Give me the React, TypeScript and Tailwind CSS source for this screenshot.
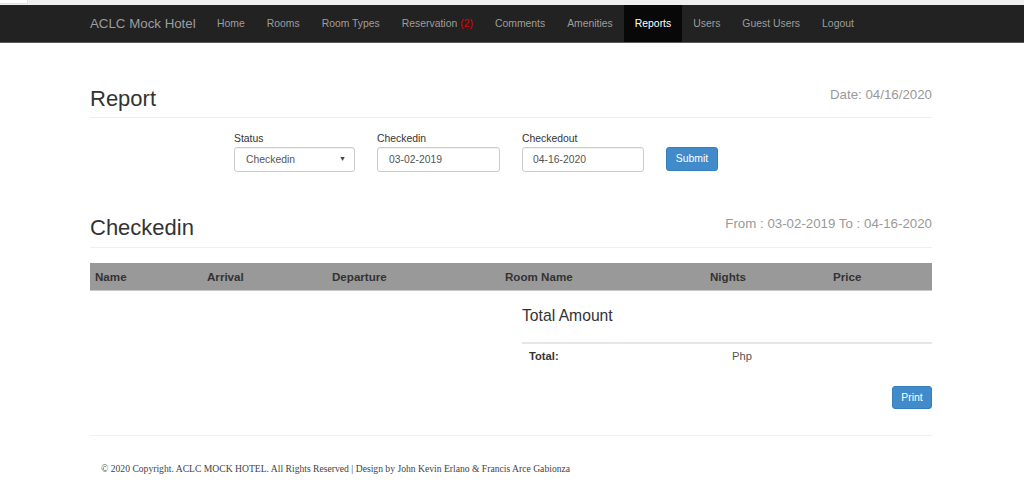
import React from "react";

const navItems = [
  "Home",
  "Rooms",
  "Room Types",
  "Reservation",
  "Comments",
  "Amenities",
  "Reports",
  "Users",
  "Guest Users",
  "Logout",
];

export default function App() {
  return (
    <div className="w-[1024px] h-[492px] bg-white overflow-hidden font-['Liberation_Sans',Arial,sans-serif] text-[#333]">
      {/* top strip */}
      <div className="h-[5px] bg-[#efefef] relative">
        <div className="absolute left-0 top-0 w-[28px] h-[4px] bg-white border-r border-b border-[#e2e2e2]" />
      </div>
      {/* navbar */}
      <div className="h-[38px] bg-[#222] border-b border-[#5a5a5a] flex items-stretch">
        <div className="ml-[90px] w-[116px] pt-[1px] flex items-center text-[13.3px] text-[#9d9d9d]">
          ACLC Mock Hotel
        </div>
        <div className="flex items-stretch">
          {navItems.map((n) => (
            <div
              key={n}
              className={
                n === "Reports"
                  ? "px-[11px] pt-[1px] flex items-center text-[10.4px] text-white bg-[#080808]"
                  : "px-[11px] pt-[1px] flex items-center text-[10.4px] text-[#9d9d9d]"
              }
            >
              {n}
              {n === "Reservation" && (
                <span className="ml-[3px] text-[#e00000]">(2)</span>
              )}
            </div>
          ))}
        </div>
      </div>

      <div className="ml-[90px] w-[842px]">
        {/* header 1 */}
        <div className="mt-[43px] pb-[7px] border-b border-[#eee] flex justify-between items-start">
          <h2 className="text-[22px] leading-[24px] text-[#333] pt-[1px] -mb-[1px]">Report</h2>
          <div className="text-[13.3px] leading-[16px] text-[#999] mt-[1px]">Date: 04/16/2020</div>
        </div>

        {/* form */}
        <div className="ml-[144px] mt-[15px] flex items-end gap-[22px]">
          <div className="flex flex-col">
            <label className="text-[10.4px] leading-[12px] mb-[2px] text-[#333]">Status</label>
            <div className="w-[121px] h-[25px] border border-[#ccc] rounded-[3px] flex items-center justify-between pl-[11px] pr-[8px] text-[10.4px] text-[#555] shadow-[inset_0_1px_1px_rgba(0,0,0,0.06)]">
              <span>Checkedin</span>
              <span className="text-[7px] text-[#444]">▼</span>
            </div>
          </div>
          <div className="flex flex-col">
            <label className="text-[10.4px] leading-[12px] mb-[2px] text-[#333]">Checkedin</label>
            <div className="w-[123px] h-[25px] border border-[#ccc] rounded-[3px] flex items-center pl-[11px] text-[10.4px] text-[#555] shadow-[inset_0_1px_1px_rgba(0,0,0,0.06)]">
              03-02-2019
            </div>
          </div>
          <div className="flex flex-col">
            <label className="text-[10.4px] leading-[12px] mb-[2px] text-[#333]">Checkedout</label>
            <div className="w-[122px] h-[25px] border border-[#ccc] rounded-[3px] flex items-center pl-[10px] text-[10.4px] text-[#555] shadow-[inset_0_1px_1px_rgba(0,0,0,0.06)]">
              04-16-2020
            </div>
          </div>
          <div className="w-[52px] h-[24px] mb-[1px] bg-[#428bca] border border-[#357ebd] rounded-[3px] text-white text-[10.4px] flex items-center justify-center">
            Submit
          </div>
        </div>

        {/* header 2 */}
        <div className="mt-[44px] pb-[7px] border-b border-[#eee] flex justify-between items-start">
          <h2 className="text-[22px] leading-[24px] text-[#333]">Checkedin</h2>
          <div className="text-[13.3px] leading-[16px] text-[#999]">
            From : 03-02-2019 To : 04-16-2020
          </div>
        </div>

        {/* table header */}
        <div className="mt-[15px] h-[28px] bg-[#999] border-b border-[#c8c8c8] flex items-center text-[11.6px] font-bold text-[#333]">
          <div className="w-[112px] pl-[5px]">Name</div>
          <div className="w-[125px] pl-[5px]">Arrival</div>
          <div className="w-[173px] pl-[5px]">Departure</div>
          <div className="w-[205px] pl-[5px]">Room Name</div>
          <div className="w-[123px] pl-[5px]">Nights</div>
          <div className="flex-1 pl-[5px]">Price</div>
        </div>

        {/* total section */}
        <div className="ml-[432px]">
          <div className="mt-[16px] text-[15.7px] leading-[18px] text-[#333]">Total Amount</div>
          <div className="mt-[17px] border-t-2 border-[#e6e6e6] flex pt-[6px] pb-[6px] text-[11.2px] leading-[13px]">
            <div className="w-[210px] pl-[7px] font-bold text-[#333]">Total:</div>
            <div className="text-[#555]">Php</div>
          </div>
          <div className="mt-[17px] flex justify-end">
            <div className="w-[40px] h-[23px] bg-[#428bca] border border-[#357ebd] rounded-[3px] text-white text-[10.4px] flex items-center justify-center">
              Print
            </div>
          </div>
        </div>

        {/* footer */}
        <div className="mt-[26px] border-t border-[#f0f0f0]">
          <div className="mt-[27px] ml-[11px] font-['Liberation_Serif','Times_New_Roman',serif] text-[9.65px] leading-[12px] text-[#444]">
            © 2020 Copyright. ACLC MOCK HOTEL. All Rights Reserved | Design by John Kevin Erlano &amp; Francis Arce Gabionza
          </div>
        </div>
      </div>
    </div>
  );
}
